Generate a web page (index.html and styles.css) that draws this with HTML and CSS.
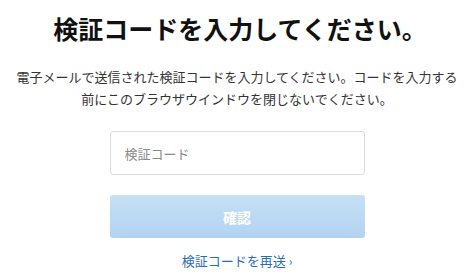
FILE: index.html
```html
<!DOCTYPE html>
<html lang="ja">
<head>
<meta charset="utf-8">
<link rel="stylesheet" href="styles.css">
</head>
<body>
<main class="page">
  <h1 class="title">検証コードを入力してください。</h1>
  <p class="desc">電子メールで送信された検証コードを入力してください。コードを入力する<br>前にこのブラウザウインドウを閉じないでください。</p>
  <form class="form">
    <input class="code-input" type="text" placeholder="検証コード">
    <button class="confirm" type="button" disabled>確認</button>
    <a class="resend" href="#">検証コードを再送<span class="chev">›</span></a>
  </form>
</main>
</body>
</html>
```
FILE: styles.css
```css
html, body {
  margin: 0;
  padding: 0;
  background: #fff;
}
body {
  font-family: "Noto Sans CJK JP", "Noto Sans", sans-serif;
  color: #333;
}
.page {
  width: 474px;
  height: 280px;
  display: flex;
  flex-direction: column;
  align-items: center;
  overflow: hidden;
}
.title {
  margin: 13px 0 0;
  font-size: 25px;
  line-height: 30px;
  font-weight: 700;
  color: #111;
  letter-spacing: 0;
  padding-left: 6px;
}
.desc {
  margin: 23px 0 0;
  font-size: 13px;
  line-height: 22px;
  text-align: center;
  color: #333;
}
.form {
  margin-top: 21px;
  width: 255px;
  display: flex;
  flex-direction: column;
  align-items: stretch;
}
.code-input {
  box-sizing: border-box;
  height: 44px;
  border: 1px solid #dcdcdc;
  border-radius: 3px;
  padding: 0 14px;
  font-family: inherit;
  font-size: 13px;
  color: #333;
  outline: none;
}
.code-input::placeholder {
  color: #8a8a8a;
}
.confirm {
  margin-top: 20px;
  height: 43px;
  border: none;
  border-radius: 3px;
  background: linear-gradient(#c6e0f6, #b2d3f0);
  color: #fff;
  font-family: inherit;
  font-size: 14px;
  font-weight: 700;
}
.resend {
  margin-top: 14px;
  align-self: center;
  font-size: 13px;
  line-height: 18px;
  color: #2b6cb8;
  text-decoration: none;
}
.chev {
  margin-left: 3px;
  font-size: 12px;
}
```
